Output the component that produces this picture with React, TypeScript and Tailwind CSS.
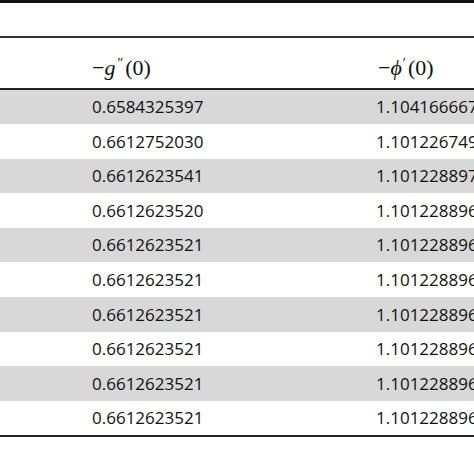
const rows: [string, string][] = [
  ['0.6584325397', '1.104166667'],
  ['0.6612752030', '1.101226749'],
  ['0.6612623541', '1.101228897'],
  ['0.6612623520', '1.101228896'],
  ['0.6612623521', '1.101228896'],
  ['0.6612623521', '1.101228896'],
  ['0.6612623521', '1.101228896'],
  ['0.6612623521', '1.101228896'],
  ['0.6612623521', '1.101228896'],
  ['0.6612623521', '1.101228896'],
]

const App = () => {
  return (
    <div className="w-[474px] h-[474px] overflow-hidden bg-white text-[#111]">
      <div className="h-[3px] bg-[#111]" />
      <div className="h-[33px]" />
      <div className="h-[1.5px] bg-[#333]" />
      <div
        className="flex h-[50px] items-end pb-[9px] text-[22px] leading-none whitespace-nowrap"
        style={{ fontFamily: '"Liberation Serif", "DejaVu Serif", serif' }}
      >
        <div className="w-[376px] shrink-0 pl-[92px]">
          <span>−</span>
          <span className="italic">g</span>
          <sup className="ml-[1px] mr-[3px] text-[14px] italic">″</sup>
          <span>(0)</span>
        </div>
        <div className="pl-[2px]">
          <span>−</span>
          <span className="italic">ϕ</span>
          <sup className="ml-[1px] mr-[2px] text-[14px]">′</sup>
          <span>(0)</span>
        </div>
      </div>
      <div className="h-[2px] bg-[#222]" />
      <div style={{ fontFamily: '"Open Sans", "Liberation Sans", sans-serif' }}>
        {rows.map(([a, b], i) => (
          <div
            key={i}
            className={`flex h-[34.6px] items-center text-[17px] font-medium whitespace-nowrap ${
              i % 2 === 0 ? 'bg-[#d8d8d8]' : 'bg-white'
            }`}
          >
            <div className="w-[376px] shrink-0 pl-[92px]">{a}</div>
            <div>{b}</div>
          </div>
        ))}
      </div>
      <div className="h-[2px] bg-[#222]" />
    </div>
  )
}

export default App
